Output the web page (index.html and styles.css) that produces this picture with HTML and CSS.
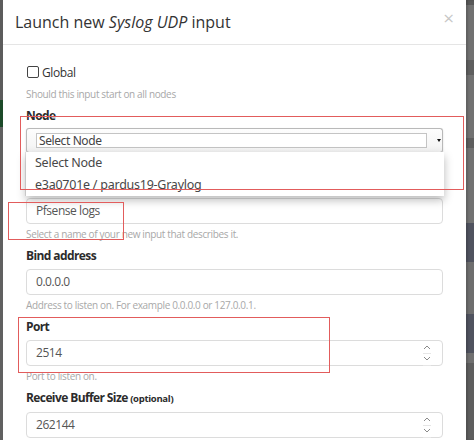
FILE: index.html
```html
<!DOCTYPE html>
<html>
<head>
<meta charset="utf-8">
<link rel="stylesheet" href="styles.css">
</head>
<body>
<div class="page">
  <div class="bg-left"></div>
  <div class="modal">
    <div class="modal-header">
      <h3 class="modal-title">Launch new <em>Syslog UDP</em> input</h3>
      <span class="close">×</span>
    </div>
    <div class="modal-body">
      <div class="checkbox-row"><span class="cb"></span><span>Global</span></div>
      <div class="help first-help">Should this input start on all nodes</div>

      <div class="group node-group">
        <label class="lbl">Node</label>
        <div class="select">
          <div class="select-inner">Select Node</div>
          <span class="caret"></span>
          <ul class="dropdown">
            <li>Select Node</li>
            <li>e3a0701e / pardus19-Graylog</li>
          </ul>
        </div>
        <div class="help-space"></div>
      </div>

      <div class="group">
        <div class="lbl-space"></div>
        <div class="input">Pfsense logs</div>
        <div class="help">Select a name of your new input that describes it.</div>
      </div>

      <div class="group">
        <label class="lbl">Bind address</label>
        <div class="input">0.0.0.0</div>
        <div class="help">Address to listen on. For example 0.0.0.0 or 127.0.0.1.</div>
      </div>

      <div class="group">
        <label class="lbl">Port</label>
        <div class="input number">2514
          <svg class="spin" width="10" height="22" viewBox="0 0 10 22"><path d="M2 5 L5 2 L8 5" fill="none" stroke="#8a8a8a" stroke-width="1"/><line x1="1" y1="9.5" x2="9" y2="9.5" stroke="#e6e6e6"/><path d="M2 13 L5 16 L8 13" fill="none" stroke="#8a8a8a" stroke-width="1"/><line x1="1" y1="21.5" x2="9" y2="21.5" stroke="#e6e6e6"/></svg>
        </div>
        <div class="help">Port to listen on.</div>
      </div>

      <div class="group">
        <label class="lbl">Receive Buffer Size <small>(optional)</small></label>
        <div class="input number">262144
          <svg class="spin" width="10" height="22" viewBox="0 0 10 22"><path d="M2 5 L5 2 L8 5" fill="none" stroke="#8a8a8a" stroke-width="1"/><line x1="1" y1="9.5" x2="9" y2="9.5" stroke="#e6e6e6"/><path d="M2 13 L5 16 L8 13" fill="none" stroke="#8a8a8a" stroke-width="1"/><line x1="1" y1="21.5" x2="9" y2="21.5" stroke="#e6e6e6"/></svg>
        </div>
      </div>
    </div>
  </div>
  <div class="bg-right"></div>

  <div class="mark mark-node"></div>
  <div class="mark mark-title"></div>
  <div class="mark mark-port"></div>
</div>
</body>
</html>
```

FILE: styles.css
```css
html, body {
  margin: 0;
  padding: 0;
  background: #666;
}

.page {
  position: relative;
  display: flex;
  width: 474px;
  height: 440px;
  overflow: hidden;
}

.bg-left {
  flex: none;
  width: 3px;
  background: linear-gradient(to bottom,
    #5c5c5c 0, #5c5c5c 100px,
    #1c4a29 100px, #1c4a29 127px,
    #606060 127px, #606060 100%);
}

.bg-right {
  flex: 1;
  box-shadow: inset 2px 0 2px rgba(0,0,0,0.15);
  background: linear-gradient(to bottom,
    #585858 0, #585858 5px,
    #717171 5px, #717171 60px,
    #5f5f5f 60px, #5f5f5f 75px,
    #727272 75px, #727272 138px,
    #5e5e5e 138px, #5e5e5e 148px,
    #727272 148px, #727272 223px,
    #50535f 223px, #50535f 262px,
    #6e6e6e 262px, #6e6e6e 314px,
    #50535f 314px, #50535f 353px,
    #707070 353px, #707070 363px,
    #5e5e5e 363px, #5e5e5e 100%);
}

.modal {
  flex: none;
  width: 463px;
  background: #fff;
  font-family: "Open Sans", "Noto Sans", sans-serif;
  color: #333;
}

.modal-header {
  height: 45px;
  box-sizing: border-box;
  border-bottom: 1px solid #e5e5e5;
  display: flex;
  align-items: center;
  justify-content: space-between;
  padding: 0 10px 0 12px;
}

.modal-title {
  margin: 0;
  font-size: 16px;
  letter-spacing: 0;
  font-weight: 400;
  color: #333;
  line-height: 22px;
}

.close {
  font-size: 19px;
  font-weight: 400;
  color: #000;
  opacity: 0.22;
  line-height: 20px;
  align-self: flex-start;
  margin-top: 8px;
  margin-right: 2px;
}

.modal-body {
  padding: 18px 23px 0;
}

.checkbox-row {
  display: flex;
  align-items: center;
  height: 18px;
  font-size: 12px;
  letter-spacing: -0.4px;
  color: #333;
}

.cb {
  width: 12px;
  height: 12px;
  box-sizing: border-box;
  border: 1.5px solid #444;
  border-radius: 2px;
  margin: 0 3px 0 1px;
}

.help {
  font-size: 10px;
  letter-spacing: -0.35px;
  line-height: 16px;
  color: #a8a8a8;
  margin-top: 2px;
  white-space: nowrap;
}

.help-space {
  height: 16px;
  margin-top: 2px;
}

.first-help {
  margin-top: 5px;
}

.group {
  margin-top: 5px;
}

.lbl {
  display: block;
  font-size: 12px;
  letter-spacing: -0.6px;
  font-weight: 700;
  line-height: 18px;
  margin-bottom: 4px;
  color: #2b2b2b;
}

.lbl-space {
  height: 18px;
  margin-bottom: 4px;
}

.lbl small {
  font-size: 9.5px;
  letter-spacing: -0.3px;
}

.node-group .lbl {
  margin-bottom: 3px;
}

.select {
  position: relative;
  height: 25px;
  box-sizing: border-box;
  border: 1px solid #b9b9b9;
  border-bottom-color: #9a9a9a;
  border-radius: 3px;
  background: linear-gradient(#fdfdfd, #f3f3f3);
  box-shadow: 0 1px 2px rgba(0,0,0,0.15);
}

.select-inner {
  position: absolute;
  left: 9px;
  top: 4px;
  width: 391px;
  height: 15px;
  box-sizing: border-box;
  border: 1px solid #c4c4c4;
  background: #fff;
  font-family: "Noto Sans", "Open Sans", sans-serif;
  font-size: 12px;
  letter-spacing: -0.4px;
  line-height: 13px;
  color: #444;
  padding-left: 2px;
}

.caret {
  position: absolute;
  right: 1px;
  top: 10px;
  width: 0;
  height: 0;
  border-left: 2.5px solid transparent;
  border-right: 2.5px solid transparent;
  border-top: 3px solid #111;
}

.dropdown {
  position: absolute;
  top: 100%;
  left: -1px;
  right: -2px;
  margin: 0;
  padding: 0;
  list-style: none;
  height: 44px;
  background: #fff;
  box-shadow: 0 4px 9px rgba(0,0,0,0.28), -1px 0 0 #e2e2e2;
  z-index: 2;
  font-family: "Noto Sans", "Open Sans", sans-serif;
  font-size: 12.5px;
  letter-spacing: -0.25px;
  color: #484848;
}

.dropdown li {
  height: 22px;
  line-height: 22px;
  padding-left: 9px;
}

.input {
  position: relative;
  height: 26px;
  box-sizing: border-box;
  border: 1px solid #dcdcdc;
  border-radius: 4px;
  padding: 0 9px;
  font-size: 12px;
  letter-spacing: -0.45px;
  line-height: 24px;
  color: #555;
}

.spin {
  position: absolute;
  right: 10px;
  top: 3px;
}

.mark {
  position: absolute;
  border: 1.5px solid #e25c5c;
  box-sizing: border-box;
  z-index: 5;
}

.mark-node {
  left: 20px;
  top: 116px;
  width: 444px;
  height: 74px;
}

.mark-title {
  left: 8px;
  top: 202px;
  width: 116px;
  height: 38px;
}

.mark-port {
  left: 18px;
  top: 317px;
  width: 312px;
  height: 56px;
}
```
